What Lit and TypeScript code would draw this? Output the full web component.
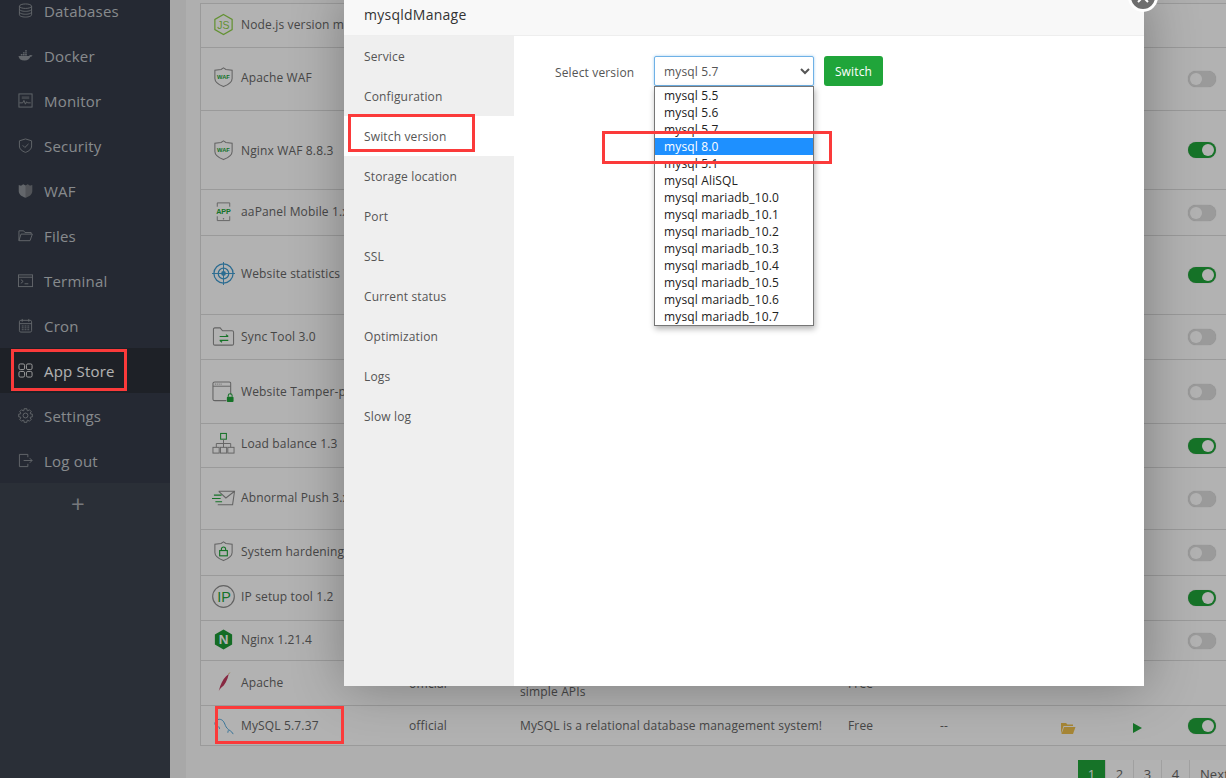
import { LitElement, html, css, svg } from "lit";
import { customElement } from "lit/decorators.js";

const gearPts = (() => {
  const p: string[] = [];
  for (let i = 0; i < 8; i++) {
    const a = (i * Math.PI) / 4;
    for (const [d, r] of [[-0.3, 5.6], [-0.2, 7.4], [0.2, 7.4], [0.3, 5.6]] as number[][]) {
      p.push(`${(8 + r * Math.cos(a + d)).toFixed(2)},${(8 + r * Math.sin(a + d)).toFixed(2)}`);
    }
  }
  return p.join(" ");
})();

const side = (body: unknown) =>
  html`<svg class="sico" viewBox="0 0 16 16" fill="none" stroke="currentColor" stroke-width="1">${body}</svg>`;

const navIcons: Record<string, unknown> = {
  Databases: side(svg`<ellipse cx="8" cy="3.4" rx="6.5" ry="2.4"/><path d="M1.5 3.4v9.2c0 1.3 2.9 2.4 6.5 2.4s6.5-1.1 6.5-2.4V3.4M1.5 6.5c0 1.3 2.9 2.4 6.5 2.4s6.5-1.1 6.5-2.4M1.5 9.6c0 1.3 2.9 2.4 6.5 2.4s6.5-1.1 6.5-2.4"/>`),
  Docker: side(svg`<path fill="currentColor" stroke="none" d="M0.5 8.5h11.2c.5-.9 1.6-1.2 2.6-.9l1.2.4c-.5 1-1.4 1.4-2.3 1.4-1 2.6-3 4-6 4-4 0-6.2-1.8-6.7-4.9zM3 6.5h1.8v1.5H3zM5.3 6.5h1.8v1.5H5.3zM7.6 6.5h1.8v1.5H7.6zM5.3 4.4h1.8v1.5H5.3zM7.6 4.4h1.8v1.5H7.6zM7.6 2.3h1.8v1.5H7.6z"/>`),
  Monitor: side(svg`<rect x="1" y="1" width="14" height="14"/><path d="M1.5 10.5h3.5l1.3-2.6 1.6 4 1.3-2.6 1 1.2h3.3"/><rect x="4" y="3.5" width="8" height="3" fill="currentColor" stroke="none" opacity=".45"/>`),
  Security: side(svg`<path d="M8 1l6.5 2v5.5c0 3.2-2.7 5.6-6.5 6.8-3.8-1.2-6.5-3.6-6.5-6.8V3z"/><path d="M5 7.8l2.3 2.3 3.9-3.8"/>`),
  WAF: side(svg`<path fill="currentColor" stroke="none" d="M.8 2l2.4 1 2.4-1.6L8 2.6l2.4-1.2L12.8 3l2.4-1v6.8c0 3.2-3 5.6-7.2 6.9C3.800 14.400.8 12 .8 8.800z"/><path fill="#000" fill-opacity=".18" stroke="none" d="M8 2.600l2.400-1.200L12.800 3l2.400-1v6.800c0 3.200-3 5.600-7.200 6.900z"/>`),
  Files: side(svg`<path d="M1 13.500V3h5l1.400 1.800H14v1.700M1 13.500h11.800L15.300 6.500H3.200z"/>`),
  Terminal: side(svg`<rect x=".5" y="2" width="15" height="12.500"/><path d="M.5 4.500h15M3 7l2.500 2L3 11M7 11.500h4"/>`),
  Cron: side(svg`<rect x="1.500" y="2.500" width="13" height="12.500" rx="1.500"/><path d="M1.500 6h13M4.500 1v3M11.500 1v3"/><path stroke-dasharray="2 1" d="M4 8.500h8M4 10.500h8M4 12.500h8"/>`),
  "App Store": side(svg`<rect x="1" y="1" width="6" height="6" rx="1.500"/><rect x="9" y="1" width="6" height="6" rx="1.500"/><rect x="1" y="9" width="6" height="6" rx="1.500"/><rect x="9" y="9" width="6" height="6" rx="1.500"/>`),
  Settings: side(svg`<polygon points=${gearPts}/><circle cx="8" cy="8" r="2.600"/>`),
  "Log out": side(svg`<path d="M10.500 4.500V1.500h-9v13h9v-3"/><path d="M6 8h9M12.500 5.500L15 8l-2.500 2.500"/>`),
};

const GR = "#20a53a";
const G = "#8f8f8f";
const t = (body: unknown) => html`<svg class="tico" viewBox="0 0 24 24" fill="none">${body}</svg>`;
const shieldWaf = t(svg`<path d="M12 2l2.500 1.600 6.500.9v8.500c0 3.700-3.900 6.500-9 8.500-5.100-2-9-4.800-9-8.500V4.500l6.500-.9z" stroke=${G} stroke-width="1.100"/><text x="12" y="14" class="svt" font-size="6" font-weight="700" fill=${GR} text-anchor="middle">WAF</text>`);

const rowIcons: Record<string, unknown> = {
  node: t(svg`<path d="M12 1.500l9 5.200v10.600l-9 5.200-9-5.200V6.700z" stroke="#8fd14a" stroke-width="1.300"/><text x="12" y="16.500" class="svt" font-size="11" fill="#8fd14a" text-anchor="middle">JS</text>`),
  waf: shieldWaf,
  app: t(svg`<path d="M5.500 7V3h13v4M5.500 17v4.500h13V17" stroke=${G} stroke-width="1"/><circle cx="12" cy="19.500" r=".8" fill=${G}/><text x="12" y="14.800" class="svt" font-size="7.500" font-weight="700" fill=${GR} text-anchor="middle">APP</text>`),
  stats: t(svg`<circle cx="12" cy="12" r="10" stroke="#3f9bd0" stroke-width="1.300"/><circle cx="12" cy="12" r="5.500" stroke="#3f9bd0" stroke-width="1.300"/><path d="M12 0v24M0 12h24" stroke="#3f9bd0" stroke-width="1"/><circle cx="12" cy="12" r="2.500" fill="#3f9bd0"/>`),
  sync: t(svg`<path d="M1.500 4.500c0-.8.500-1.500 1.500-1.500h5.500l2.500 3h10c1 0 1.500.7 1.500 1.500v12c0 .8-.5 1.500-1.500 1.500H3c-1 0-1.500-.7-1.500-1.500z" stroke=${G} stroke-width="1.100"/><path d="M8 12h9M14.500 10l2.500 2M8 16h9M8 16l2.500 2" stroke=${GR} stroke-width="1.200"/>`),
  tamper: t(svg`<path d="M19.500 15V3.500c0-.8-.5-1.500-1.500-1.500H3c-1 0-2 .7-2 1.500V20c0 .8 1 1.500 2 1.500h12" stroke=${G} stroke-width="1.100"/><path d="M1 6.500h18.500" stroke=${G} stroke-width="1"/><path d="M3 4.300h7" stroke=${G} stroke-dasharray="1 1"/><rect x="15.500" y="17.500" width="7" height="5.500" rx="1" fill=${GR}/><path d="M17 17.500v-1.200a2 2 0 014 0v1.200" stroke=${GR} stroke-width="1.100"/>`),
  load: t(svg`<rect x="9" y="1.500" width="6" height="6" stroke=${GR} stroke-width="1.100"/><path d="M12 7.500v4.500M4.500 16v-4h15v4M12 12v4" stroke=${G} stroke-width="1"/><rect x="1" y="16" width="6.500" height="6" stroke=${G} stroke-width="1"/><rect x="8.800" y="16" width="6.500" height="6" stroke=${G} stroke-width="1"/><rect x="16.500" y="16" width="6.500" height="6" stroke=${G} stroke-width="1"/>`),
  mail: t(svg`<path d="M7 5.500h16.500l-2 14H6M7 5.500l7.500 7 9-7" stroke=${G} stroke-width="1.100"/><path d="M2 9.500h8M0 13h9M3.500 16.500h7" stroke=${GR} stroke-width="1.100"/>`),
  hard: t(svg`<path d="M12 2l2.500 1.600 6.500.9v8.500c0 3.700-3.900 6.500-9 8.500-5.100-2-9-4.800-9-8.500V4.500l6.500-.9z" stroke=${G} stroke-width="1.100"/><rect x="8" y="11" width="8" height="5.500" stroke=${GR} stroke-width="1.200"/><path d="M9.800 11V9.500a2.200 2.200 0 014.400 0V11" stroke=${GR} stroke-width="1.200"/>`),
  ip: t(svg`<circle cx="12" cy="12" r="11.300" stroke=${G} stroke-width="1.200"/><text x="12.500" y="17.500" class="svt" font-size="15" fill=${GR} text-anchor="middle" letter-spacing="2">IP</text>`),
  nginx: t(svg`<path d="M12 1.500l9 5.200v10.600l-9 5.200-9-5.200V6.700z" fill="#1d9b35"/><text x="12" y="17" class="svt" font-size="14" font-weight="700" fill="#fff" text-anchor="middle">N</text>`),
  apache: t(svg`<path d="M17.500 3c-4 2.500-7 7-9 13l-1.500 5c1-1.500 1.500-2.500 2.500-3.500 4-3 6.500-8 8-14.500z" fill="#c23a5e"/><path d="M17.500 3c.3-.5.7-1 1-1.300" stroke="#d6a24a"/>`),
  mysql: t(svg`<path d="M3 11c0-3 1.500-5.500 4.500-5.500 3.500 0 5 2.500 6.500 6.500.7 2 2.500 4 5 5.500 1 .6 2.500 2 3 3.500M4 12.500l-.5 3.500M7 13l1 2.500M17 17l-.5 2.500" stroke="#4aa3d8" stroke-width="1"/>`),
};

interface Row { h: number; lift: number; name: string; icon: string; on?: boolean; apache?: boolean; mysql?: boolean; }
const rows: Row[] = [
  { h: 44, lift: 2, name: "Node.js version manager", icon: "node" },
  { h: 63, lift: 4, name: "Apache WAF", icon: "waf", on: false },
  { h: 79, lift: 0, name: "Nginx WAF 8.8.3", icon: "waf", on: true },
  { h: 46, lift: 2, name: "aaPanel Mobile 1.x", icon: "app", on: false },
  { h: 79, lift: 4, name: "Website statistics", icon: "stats", on: true },
  { h: 45, lift: 2, name: "Sync Tool 3.0", icon: "sync", on: false },
  { h: 64, lift: 0, name: "Website Tamper-proof", icon: "tamper", on: false },
  { h: 44, lift: 4, name: "Load balance 1.3", icon: "load", on: true },
  { h: 62, lift: 2, name: "Abnormal Push 3.x", icon: "mail", on: false },
  { h: 46, lift: 2, name: "System hardening", icon: "hard", on: false },
  { h: 45, lift: 4, name: "IP setup tool 1.2", icon: "ip", on: true },
  { h: 40, lift: 2, name: "Nginx 1.21.4", icon: "nginx", on: false },
  { h: 45, lift: 2, name: "Apache", icon: "apache", apache: true },
  { h: 40, lift: 0, name: "MySQL 5.7.37", icon: "mysql", on: true, mysql: true },
];

const navItems = ["Databases", "Docker", "Monitor", "Security", "WAF", "Files", "Terminal", "Cron", "App Store", "Settings", "Log out"];
const menu = ["Service", "Configuration", "Switch version", "Storage location", "Port", "SSL", "Current status", "Optimization", "Logs", "Slow log"];
const versions = ["mysql 5.5", "mysql 5.6", "mysql 5.7", "mysql 8.0", "mysql 5.1", "mysql AliSQL", "mysql mariadb_10.0", "mysql mariadb_10.1", "mysql mariadb_10.2", "mysql mariadb_10.3", "mysql mariadb_10.4", "mysql mariadb_10.5", "mysql mariadb_10.6", "mysql mariadb_10.7"];

@customElement("app-root")
export class AppRoot extends LitElement {
  static styles = css`
    :host { display: block; font-family: "Open Sans", "Noto Sans", sans-serif; letter-spacing: .15px; }
    .page { position: relative; display: flex; width: 1226px; height: 778px; overflow: hidden; background: #fbfbfb; }
    .sidebar { flex: 0 0 170px; background: #3d444f; display: flex; flex-direction: column; }
    .nav { background: #363c49; margin-top: -12px; }
    .nav-item { height: 45px; display: flex; align-items: center; gap: 11px; padding-left: 18px; color: #c2c6cb; font-size: 15px; letter-spacing: .2px; }
    .nav-item.active { background: #2c3039; color: #fff; }
    .sico { width: 15px; height: 15px; flex: none; color: #8e939a; }
    .active .sico { color: #e8e8e8; }
    .plus { height: 40px; display: flex; align-items: center; justify-content: center; color: #a9adb2; font-size: 24px; padding-right: 14px; }
    .main { flex: 1; min-width: 0; display: flex; }
    .gutter { flex: 0 0 16px; background: #f1f1f1; }
    .content { flex: 1; min-width: 0; padding: 3px 0 0 14px; }
    .table { background: #fff; border-left: 1px solid #ddd; border-bottom: 1px solid #ddd; width: 1060px; }
    .row { display: grid; grid-template-columns: 208px 111px 328px 80px 132px 73px 55px 40px; align-items: center; border-top: 1px solid #ddd; box-sizing: border-box; font-size: 12px; color: #666; }
    .name { display: flex; align-items: center; padding-left: 11px; gap: 6px; white-space: nowrap; box-sizing: border-box; }
    .tico { width: 23px; height: 23px; flex: none; overflow: visible; }
    .svt { font-family: "Liberation Sans", sans-serif; letter-spacing: 0; }
    .desc { line-height: 18px; }
    .dash { padding-left: 12px; }
    .toggle { display: block; width: 28px; height: 16px; border-radius: 8px; background: #ddd; position: relative; box-shadow: 0 0 1px #bbb; }
    .toggle::after { content: ""; position: absolute; left: 2px; top: 2px; width: 12px; height: 12px; border-radius: 50%; background: #fff; }
    .toggle.on { background: #20a53a; }
    .toggle.on::after { left: 14px; }
    .action { padding-top: 4px; }
    .folder { width: 16px; height: 14px; display: block; }
    .play { width: 0; height: 0; border-left: 9px solid #20a53a; border-top: 5.5px solid transparent; border-bottom: 5.5px solid transparent; display: block; }
    .pager { display: flex; margin: 14px 0 0 878px; white-space: nowrap; font-size: 13px; color: #666; }
    .pager span { box-sizing: border-box; width: 28px; height: 27px; display: flex; align-items: center; justify-content: center; border-right: 1px solid #e6e6e6; background: #fff; flex: none; }
    .pager span.cur { background: #20a53a; color: #fff; }
    .pager span.next { width: 50px; }
    .shade { position: absolute; inset: 0; background: rgba(0, 0, 0, .3); }
    .modal { position: absolute; left: 344px; top: -7px; width: 800px; height: 693px; background: #fff; box-shadow: 1px 1px 50px rgba(0, 0, 0, .3); display: flex; flex-direction: column; }
    .head { flex: 0 0 43px; box-sizing: border-box; background: #f8f8f8; border-bottom: 1px solid #eee; padding: 9px 0 0 20px; font-size: 14px; line-height: 26px; color: #333; letter-spacing: .25px; }
    .close { position: absolute; left: 784px; top: -11px; width: 24px; height: 24px; box-sizing: content-box; border: 3px solid #fff; border-radius: 50%; background: #6e6e6e; }
    .close svg { display: block; width: 24px; height: 24px; }
    .body { flex: 1; display: flex; min-height: 0; }
    .menu { flex: 0 0 170px; background: #efefef; }
    .menu div { height: 40px; display: flex; align-items: center; padding-left: 20px; font-size: 12px; color: #555; }
    .menu div.active { background: #fff; }
    .pane { flex: 1; position: relative; padding: 20px 0 0 41px; display: flex; align-items: flex-start; font-size: 12px; color: #555; }
    .pane label { width: 99px; line-height: 33px; flex: none; }
    select { width: 160px; height: 30px; margin-right: 10px; box-sizing: border-box; font: 12px "Open Sans", "Noto Sans", sans-serif; letter-spacing: .15px; color: #555; padding-left: 5px; background: #fff; border: 1px solid #6fb1e6; border-radius: 2px; outline: none; box-shadow: 0 0 3px rgba(102, 175, 233, .6); }
    button { width: 59px; height: 30px; background: #20a53a; border: 0; border-radius: 3px; color: #fff; font: 12px "Open Sans", "Noto Sans", sans-serif; letter-spacing: .15px; padding: 0; }
    .list { position: absolute; left: 140px; top: 50px; width: 160px; box-sizing: border-box; background: #fff; border: 1px solid #767676; box-shadow: 1px 3px 6px rgba(0, 0, 0, .3); }
    .list div { height: 17px; line-height: 17px; padding-left: 9px; font-size: 12px; color: #222; white-space: nowrap; }
    .list div.sel { background: #1e90ff; color: #fff; }
    .red { position: absolute; border: 3px solid #fb3a3a; box-sizing: border-box; }
  `;

  renderRow(r: Row) {
    return html`<div class="row" style="height:${r.h}px">
      <div class="name" style="padding-bottom:${r.lift}px">${rowIcons[r.icon]}<span>${r.name}</span></div>
      ${r.apache
        ? html`<div>official</div><div class="desc">The most widely used web server with<br />simple APIs</div><div>Free</div><div></div><div></div><div></div>`
        : r.mysql
        ? html`<div>official</div><div>MySQL is a relational database management system!</div><div>Free</div><div class="dash">--</div>
            <div class="action"><svg class="folder" viewBox="0 0 16 14"><path fill="#f0c24e" d="M1 2h5l1.500 1.500H13V5H3.500L1 13z"/><path fill="#f0c24e" d="M4 6h11.500L13 13H1.500z"/></svg></div>
            <div class="action"><i class="play"></i></div>`
        : html`<div></div><div></div><div></div><div></div><div></div><div></div>`}
      <div>${r.on === undefined ? "" : html`<i class="toggle ${r.on ? "on" : ""}"></i>`}</div>
    </div>`;
  }

  render() {
    return html`<div class="page">
      <aside class="sidebar">
        <div class="nav">
          ${navItems.map(
            (n) => html`<div class="nav-item ${n === "App Store" ? "active" : ""}">${navIcons[n]}<span>${n}</span></div>`
          )}
        </div>
        <div class="plus">+</div>
      </aside>
      <div class="main">
        <div class="gutter"></div>
        <div class="content">
          <div class="table">${rows.map((r) => this.renderRow(r))}</div>
          <div class="pager"><span class="cur">1</span><span>2</span><span>3</span><span>4</span><span class="next">Next</span></div>
        </div>
      </div>
      <div class="shade"></div>
      <div class="modal">
        <div class="head">mysqldManage</div>
        <div class="close"><svg viewBox="0 0 24 24"><path d="M7 7l10 10M17 7L7 17" stroke="#fff" stroke-width="2"/></svg></div>
        <div class="body">
          <div class="menu">
            ${menu.map((m) => html`<div class=${m === "Switch version" ? "active" : ""}>${m}</div>`)}
          </div>
          <div class="pane">
            <label>Select version</label>
            <select><option>mysql 5.7</option></select>
            <button>Switch</button>
            <div class="list">
              ${versions.map((v) => html`<div class=${v === "mysql 8.0" ? "sel" : ""}>${v}</div>`)}
            </div>
          </div>
        </div>
      </div>
      <div class="red" style="left:11px;top:349px;width:116px;height:42px"></div>
      <div class="red" style="left:348px;top:114px;width:127px;height:38px"></div>
      <div class="red" style="left:602px;top:131px;width:230px;height:33px"></div>
      <div class="red" style="left:215px;top:706px;width:129px;height:38px"></div>
    </div>`;
  }
}
